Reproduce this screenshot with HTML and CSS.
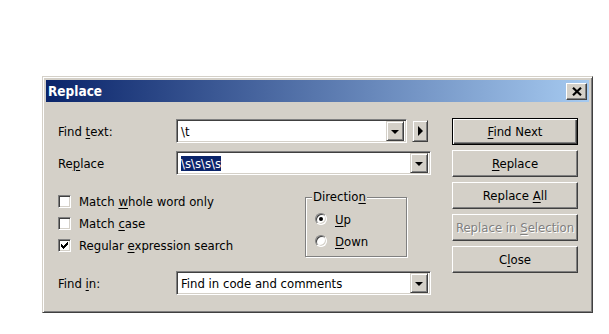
FILE: index.html
```html
<!DOCTYPE html>
<html>
<head>
<meta charset="utf-8">
<link rel="stylesheet" href="styles.css">
</head>
<body>
<div class="dialog">
  <div class="titlebar">
    <span class="title">Replace</span>
    <span class="close"><svg width="10" height="9" viewBox="0 0 10 9"><path d="M1 0.8 L9 8.2 M9 0.8 L1 8.2" stroke="#000" stroke-width="2.2" fill="none"/></svg></span>
  </div>
  <div class="content">
    <div class="left">
      <div class="row row-find">
        <span class="label">Find <u>t</u>ext:</span>
        <div class="combo combo-short">
          <span class="ctext">\t</span>
          <span class="dd"><span class="arrow-down"></span></span>
        </div>
        <span class="tbtn"><span class="arrow-right"></span></span>
      </div>
      <div class="row row-replace">
        <span class="label">Re<u>p</u>lace</span>
        <div class="combo combo-long">
          <span class="ctext"><span class="sel">\s\s\s\s</span></span>
          <span class="dd"><span class="arrow-down"></span></span>
        </div>
      </div>
      <div class="options">
        <div class="checklist">
          <div class="chk"><span class="box"></span><span>Match <u>w</u>hole word only</span></div>
          <div class="chk"><span class="box"></span><span>Match <u>c</u>ase</span></div>
          <div class="chk"><span class="box"><svg width="7" height="7" viewBox="0 0 7 7" shape-rendering="crispEdges"><path d="M0 2h1v3H0z M1 3h1v3H1z M2 4h1v3H2z M3 3h1v3H3z M4 2h1v3H4z M5 1h1v3H5z M6 0h1v3H6z" fill="#000"/></svg></span><span>Regular <u>e</u>xpression search</span></div>
        </div>
        <div class="group">
          <span class="legend">Directio<u>n</u></span>
          <div class="radio"><span class="rb on"></span><span><u>U</u>p</span></div>
          <div class="radio"><span class="rb"></span><span><u>D</u>own</span></div>
        </div>
      </div>
      <div class="row row-in">
        <span class="label">Find <u>i</u>n:</span>
        <div class="combo combo-long">
          <span class="ctext">Find in code and comments</span>
          <span class="dd"><span class="arrow-down"></span></span>
        </div>
      </div>
    </div>
    <div class="right">
      <div class="btn default"><span><u>F</u>ind Next</span></div>
      <div class="btn"><span><u>R</u>eplace</span></div>
      <div class="btn"><span>Replace <u>A</u>ll</span></div>
      <div class="btn disabled"><span>Replace in <u>S</u>election</span></div>
      <div class="btn"><span>C<u>l</u>ose</span></div>
    </div>
  </div>
</div>
</body>
</html>
```

FILE: styles.css
```css
* { box-sizing: border-box; }
html, body { margin: 0; background: #fff; }
body {
  width: 609px;
  height: 334px;
  padding: 76px 0 0 42px;
  font-family: "DejaVu Sans Condensed", "DejaVu Sans", sans-serif;
  font-stretch: condensed;
  font-size: 13px;
  color: #000;
  overflow: hidden;
}
u { text-underline-offset: 2px; text-decoration-thickness: 1px; }

.dialog {
  width: 551px;
  height: 237px;
  background: #d4d0c8;
  border: 1px solid;
  border-color: #d4d0c8 #404040 #404040 #d4d0c8;
  box-shadow: inset 1px 1px 0 #fff, inset -1px -1px 0 #808080;
  padding: 3px;
}

.titlebar {
  height: 22px;
  display: flex;
  align-items: center;
  justify-content: space-between;
  padding-left: 2px;
  padding-right: 2px;
  background: linear-gradient(to right, #0a246a, #a6caf0);
}
.title { color: #fff; font-weight: bold; font-size: 13.5px; }
.close {
  width: 21px;
  height: 17px;
  background: #d4d0c8;
  border: 1px solid;
  border-color: #fff #404040 #404040 #fff;
  box-shadow: inset -1px -1px 0 #808080, inset 1px 1px 0 #d4d0c8;
  display: flex;
  align-items: center;
  justify-content: center;
}
.close svg { display: block; }

.content {
  display: flex;
  padding: 16px 11px 0 12px;
}
.left { width: 394px; }

.row { display: flex; align-items: center; height: 24px; }
.row-find { margin-top: 1px; }
.row-replace { margin-top: 8px; }
.label { width: 118px; }

.combo {
  height: 24px;
  display: flex;
  align-items: center;
  justify-content: space-between;
  background: #fff;
  border: 1px solid;
  border-color: #808080 #fff #fff #808080;
  box-shadow: inset 1px 1px 0 #404040, inset -1px -1px 0 #d4d0c8;
  padding: 2px 2px 2px 4px;
}
.combo-short { width: 231px; }
.combo-long { width: 255px; }
.ctext { white-space: nowrap; }
.sel { background: #0a246a; color: #fff; display: inline-block; line-height: 15px; }

.dd, .tbtn {
  display: flex;
  align-items: center;
  justify-content: center;
  background: #d4d0c8;
  border: 1px solid;
  border-color: #d4d0c8 #404040 #404040 #d4d0c8;
  box-shadow: inset 1px 1px 0 #fff, inset -1px -1px 0 #808080;
}
.dd { width: 18px; height: 20px; }
.tbtn { width: 16px; height: 22px; margin-left: 5px; }
.arrow-down {
  width: 0; height: 0;
  border-left: 4px solid transparent;
  border-right: 4px solid transparent;
  border-top: 4px solid #000;
  margin-top: 1px;
}
.arrow-right {
  width: 0; height: 0;
  border-top: 5px solid transparent;
  border-bottom: 5px solid transparent;
  border-left: 5px solid #000;
  margin-left: 1px;
}

.options { display: flex; height: 96px; }
.checklist { width: 247px; padding-top: 20px; }
.chk { display: flex; align-items: center; height: 13px; margin-bottom: 9px; gap: 8px; white-space: nowrap; }
.box {
  width: 13px; height: 13px;
  flex: none;
  background: #fff;
  border: 1px solid;
  border-color: #808080 #fff #fff #808080;
  box-shadow: inset 1px 1px 0 #404040, inset -1px -1px 0 #d4d0c8;
  display: flex;
  align-items: center;
  justify-content: center;
}
.box svg { display: block; }

.group {
  position: relative;
  width: 102px;
  height: 60px;
  margin-top: 22px;
  border: 1px solid #808080;
  box-shadow: inset 1px 1px 0 #fff, 1px 1px 0 #fff;
  padding: 15px 0 0 9px;
}
.legend {
  position: absolute;
  top: -9px;
  left: 6px;
  padding: 0 1px;
  line-height: 15px;
  background: #d4d0c8;
}
.radio { display: flex; align-items: center; height: 12px; margin-bottom: 10px; gap: 8px; }
.rb {
  width: 12px; height: 12px;
  flex: none;
  border-radius: 50%;
  background: #fff;
  border: 1px solid;
  border-color: #808080 #fff #fff #808080;
  box-shadow: inset 1px 1px 0 #404040, inset -1px -1px 0 #d4d0c8;
  display: flex;
  align-items: center;
  justify-content: center;
}
.rb.on::after {
  content: "";
  width: 4px; height: 4px;
  border-radius: 50%;
  background: #000;
}

.right { width: 126px; }
.btn {
  height: 27px;
  margin-bottom: 5px;
  display: flex;
  align-items: center;
  justify-content: center;
  white-space: nowrap;
  border: 1px solid;
  border-color: #fff #404040 #404040 #fff;
  box-shadow: inset -1px -1px 0 #808080, inset 1px 1px 0 #d4d0c8;
}
.btn.default {
  border-color: #000;
  box-shadow: inset 1px 1px 0 #fff, inset -1px -1px 0 #404040, inset -2px -2px 0 #808080;
}
.btn.disabled { color: #808080; text-shadow: 1px 1px 0 #fff; }
```
